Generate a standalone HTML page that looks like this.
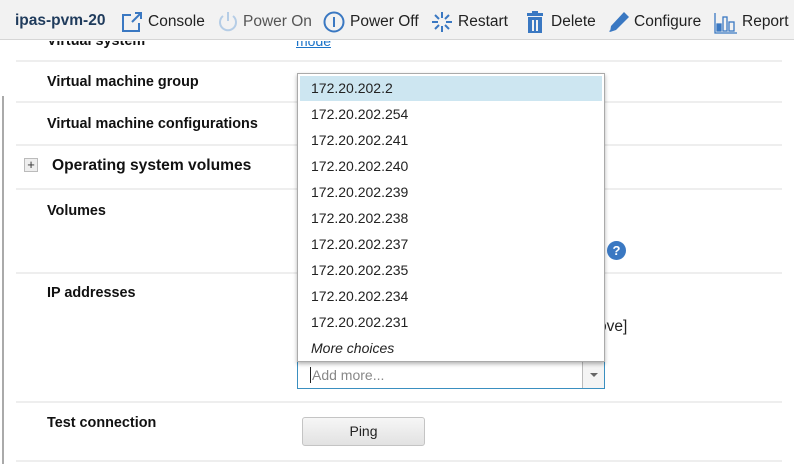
<!DOCTYPE html>
<html><head><style>
*{margin:0;padding:0;box-sizing:border-box}
body{width:794px;height:464px;overflow:hidden;background:#fff;font-family:"Liberation Sans",Arial,sans-serif;position:relative}
.hdr{position:absolute;left:0;top:0;width:794px;height:40px;background:#f2f2f2;border-bottom:1px solid #d6d6d6}
.t{position:absolute;font-size:15.5px;color:#222;top:13px;white-space:nowrap}
.lbl{position:absolute;left:47px;font-size:14.4px;font-weight:bold;color:#111;white-space:nowrap}
.sep{position:absolute;left:16px;width:766px;height:2px;background:#eee}
.dd{position:absolute;left:297px;top:73px;width:308px;height:289px;background:#fff;border:1px solid #aaa;box-shadow:0 2px 4px rgba(0,0,0,.3)}
.it{position:absolute;left:13px;font-size:14px;color:#222}
</style></head><body>
<div class="hdr">
<div style="position:absolute;left:15px;top:12px;font-size:15.5px;font-weight:bold;color:#1f3b5c;width:98px;overflow:hidden;white-space:nowrap">ipas-pvm-20</div>
<svg style="position:absolute;left:121px;top:11px" width="22" height="22" viewBox="0 0 22 22" fill="none" stroke="#3a78c2" stroke-width="2"><path d="M10 4H2v16h16v-8"/><path d="M11 11L20 2M14 2h6v6"/></svg>
<div class="t" style="left:148px">Console</div>
<svg style="position:absolute;left:217px;top:11px" width="22" height="22" viewBox="0 0 22 22" fill="none" stroke="#b5cde6" stroke-width="2"><path d="M6 5a8 8 0 1 0 10 0"/><path d="M11 1v9"/></svg>
<div class="t" style="left:243px;color:#555">Power On</div>
<svg style="position:absolute;left:323px;top:11px" width="22" height="22" viewBox="0 0 22 22" fill="none" stroke="#3a78c2" stroke-width="2"><circle cx="11" cy="11" r="9.5"/><path d="M11 6v10"/></svg>
<div class="t" style="left:350px">Power Off</div>
<svg style="position:absolute;left:431px;top:11px" width="22" height="22" viewBox="0 0 22 22" stroke="#3a78c2" stroke-width="2"><path d="M11 1v6M11 15v6M1 11h6M15 11h6M4 4l4 4M14 14l4 4M18 4l-4 4M8 14l-4 4"/></svg>
<div class="t" style="left:458px">Restart</div>
<svg style="position:absolute;left:526px;top:10px" width="18" height="24" viewBox="0 0 18 24" fill="#3a78c2"><rect x="1" y="3" width="16" height="3"/><rect x="6" y="1" width="6" height="2"/><path d="M2 7h14v16H2z"/><rect x="6" y="10" width="2" height="11" fill="#f2f2f2"/><rect x="10" y="10" width="2" height="11" fill="#f2f2f2"/></svg>
<div class="t" style="left:551px">Delete</div>
<svg style="position:absolute;left:607px;top:10px" width="24" height="24" viewBox="0 0 24 24" fill="#3a78c2"><path d="M17 2l5 5-13 13-6 2 1-6z"/><path d="M2 22l2-1-1-1z"/></svg>
<div class="t" style="left:634px">Configure</div>
<svg style="position:absolute;left:714px;top:12px" width="24" height="22" viewBox="0 0 24 22" fill="none" stroke="#3a78c2" stroke-width="1.3"><path d="M1 1v20h22"/><rect x="3" y="12" width="4" height="7" fill="#3a78c2"/><rect x="9" y="5" width="4" height="14"/><rect x="15" y="10" width="5" height="9"/></svg>
<div class="t" style="left:742px">Report</div>
</div>
<div style="position:absolute;left:2px;top:96px;width:2px;height:368px;background:#aaa"></div>
<div style="position:absolute;left:47px;top:41px;font-size:14.4px;font-weight:bold;color:#111;height:7px;overflow:hidden;line-height:14px"><div style="margin-top:-7px">Virtual system</div></div>
<div style="position:absolute;left:296px;top:41px;font-size:14px;color:#1a73c8;height:7px;overflow:hidden;line-height:14px"><div style="margin-top:-7px;text-decoration:underline">mode</div></div>
<div class="sep" style="top:60px"></div>
<div class="lbl" style="top:74px">Virtual machine group</div>
<div class="sep" style="top:101px"></div>
<div class="lbl" style="top:116px">Virtual machine configurations</div>
<div class="sep" style="top:144px"></div>
<div style="position:absolute;left:24px;top:158px;width:14px;height:14px;border:1px solid #bbb;background:#eee;font-size:13px;line-height:11px;text-align:center;color:#333">+</div>
<div class="lbl" style="top:157px;left:52px;font-size:15.6px">Operating system volumes</div>
<div class="sep" style="top:188px"></div>
<div class="lbl" style="top:203px">Volumes</div>
<div style="position:absolute;left:607px;top:241px;width:19px;height:19px;border-radius:50%;background:#3a78c2;color:#fff;font-weight:bold;font-size:13px;text-align:center;line-height:19px">?</div>
<div class="sep" style="top:272px"></div>
<div class="lbl" style="top:285px">IP addresses</div>
<div style="position:absolute;left:598px;top:318px;font-size:15.5px;color:#222">ove]</div>
<div style="position:absolute;left:297px;top:361px;width:308px;height:28px;border:1px solid #3a8fc0;background:#fff">
<div style="position:absolute;left:12px;top:5px;font-size:14px;color:#888;border-left:1px solid #222;padding-left:1px">Add more...</div>
<div style="position:absolute;right:0;top:0;width:22px;height:26px;border-left:1px solid #bbb;background:#f4f4f4"><div style="position:absolute;left:7px;top:11px;border:4px solid transparent;border-top:4px solid #666"></div></div>
</div>
<div class="sep" style="top:401px"></div>
<div class="lbl" style="top:415px">Test connection</div>
<div style="position:absolute;left:302px;top:417px;width:123px;height:29px;border:1px solid #c4c4c4;border-radius:3px;background:linear-gradient(#f6f6f6,#e2e2e2);text-align:center;line-height:27px;font-size:14px;color:#222">Ping</div>
<div class="sep" style="top:460px"></div>
<div class="dd">
<div style="position:absolute;left:2px;top:2px;width:302px;height:25px;background:#cde6f1"></div>
<div class="it" style="top:6px">172.20.202.2</div>
<div class="it" style="top:32px">172.20.202.254</div>
<div class="it" style="top:58px">172.20.202.241</div>
<div class="it" style="top:84px">172.20.202.240</div>
<div class="it" style="top:110px">172.20.202.239</div>
<div class="it" style="top:136px">172.20.202.238</div>
<div class="it" style="top:162px">172.20.202.237</div>
<div class="it" style="top:188px">172.20.202.235</div>
<div class="it" style="top:214px">172.20.202.234</div>
<div class="it" style="top:240px">172.20.202.231</div>
<div class="it" style="top:266px;font-style:italic">More choices</div>
</div>
</body></html>
